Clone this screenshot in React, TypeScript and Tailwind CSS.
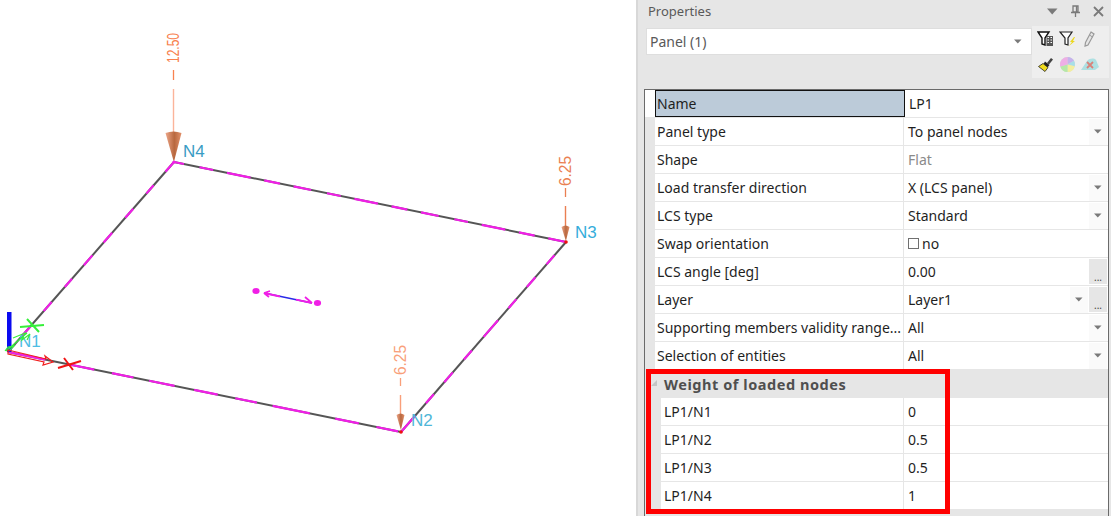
import React from "react";

type Row = { label: string; value: React.ReactNode; arrow?: boolean; more?: boolean; muted?: boolean };

const rows: Row[] = [
  { label: "Panel type", value: "To panel nodes", arrow: true },
  { label: "Shape", value: "Flat", muted: true },
  { label: "Load transfer direction", value: "X (LCS panel)", arrow: true },
  { label: "LCS type", value: "Standard", arrow: true },
  {
    label: "Swap orientation",
    value: (
      <span className="flex items-center gap-[3px]">
        <span className="w-[11px] h-[11px] border border-[#707070] bg-white" />
        no
      </span>
    ),
  },
  { label: "LCS angle [deg]", value: "0.00", more: true },
  { label: "Layer", value: "Layer1", arrow: true, more: true },
  { label: "Supporting members validity range...", value: "All", arrow: true },
  { label: "Selection of entities", value: "All", arrow: true },
];

const nodes: [string, string][] = [
  ["LP1/N1", "0"],
  ["LP1/N2", "0.5"],
  ["LP1/N3", "0.5"],
  ["LP1/N4", "1"],
];

function Caret() {
  return (
    <svg width="8" height="5" viewBox="0 0 8 5" className="block">
      <path d="M0 .5h7.500L3.800 4.500z" fill="#7a7a7a" />
    </svg>
  );
}

function Load({ x, textY, label, dash, line, cone, tip, halfW, color, lineColor }: {
  x: number; textY: number; label: string; dash: [number, number]; line: [number, number]; cone: number; tip: number; halfW: number; color: string; lineColor: string;
}) {
  const id = `cone${Math.round(x)}`;
  return (
    <g>
      <text x={0} y={0} transform={`translate(${x + 5.5} ${textY}) rotate(-90)`} fontFamily="'Liberation Sans', sans-serif" fontSize="16" fill={color} textLength={30} lengthAdjust="spacingAndGlyphs">
        {label}
      </text>
      <line x1={x} x2={x} y1={dash[0]} y2={dash[1]} stroke={color} strokeWidth="1.3" />
      <line x1={x} x2={x} y1={line[0]} y2={line[1]} stroke={lineColor} strokeWidth="1.4" />
      <defs>
        <linearGradient id={id} x1="0" x2="1" y1="0" y2="0">
          <stop offset="0" stopColor="#eda78a" />
          <stop offset="0.55" stopColor="#b8683f" />
          <stop offset="1" stopColor="#e2916b" />
        </linearGradient>
      </defs>
      <path d={`M${x - halfW} ${cone}Q${x} ${cone - 3} ${x + halfW} ${cone}L${x + 0.4} ${tip}z`} fill={`url(#${id})`} />
    </g>
  );
}

function Edge({ a, b, dash, offset = 0 }: { a: [number, number]; b: [number, number]; dash: string; offset?: number }) {
  return (
    <g>
      <line x1={a[0]} y1={a[1]} x2={b[0]} y2={b[1]} stroke="#555555" strokeWidth="2" />
      <line x1={a[0]} y1={a[1]} x2={b[0]} y2={b[1]} stroke="#f01fe6" strokeWidth="2.2" strokeDasharray={dash} strokeDashoffset={offset} />
    </g>
  );
}

function Canvas() {
  const n1: [number, number] = [8, 352];
  const n2: [number, number] = [401, 432];
  const n3: [number, number] = [566, 242];
  const n4: [number, number] = [174, 162];
  return (
    <svg width="636" height="516" viewBox="0 0 636 516" className="block shrink-0">
      <Edge a={n1} b={n2} dash="38 26 24 18 22 16 26 20 24 18 22 16" />
      <Edge a={n2} b={n3} dash="22 16 12 16 13 17 12 18" />
      <Edge a={n3} b={n4} dash="18 14 16 14 24 14 14 16" />
      <Edge a={n4} b={n1} dash="13 18 11 20 12 20 13 17" />
      <Load x={173.5} textY={63} label="12.50" dash={[70, 80]} line={[89, 134]} cone={133} tip={162} halfW={8} color="#f8824f" lineColor="#fbb49a" />
      <Load x={565.5} textY={186} label="6.25" dash={[188, 197]} line={[206, 228]} cone={227} tip={241} halfW={4} color="#ea7f52" lineColor="#ea7f52" />
      <Load x={400.5} textY={375} label="6.25" dash={[378, 386]} line={[395, 416]} cone={415} tip={430} halfW={4} color="#f99f7a" lineColor="#f99f7a" />
      <circle cx={174} cy={162} r={1.6} fill="#f01fe6" />
      <circle cx={566} cy={242} r={1.8} fill="#ee1111" />
      <circle cx={401} cy={432} r={1.8} fill="#ee1111" />
      <g fontFamily="'Liberation Sans', sans-serif" fontSize="17">
        <text x={183} y={157} fill="#3a9cc4">N4</text>
        <text x={575} y={238} fill="#35addb">N3</text>
        <text x={411} y={426} fill="#4fb6d8">N2</text>
        <text x={19} y={347} fill="#4fbde4">N1</text>
      </g>
      <rect x={7} y={312} width={4.500} height={40} fill="#0a0af0" />
      <path d="M6 351L27 333M5 351l3-4 6-1-5 5M13 338l12-5-3 7 8-6-3 6" stroke="#35f03a" strokeWidth="1.200" fill="none" />
      <path d="M20 327l24-2M27 319l12 13" stroke="#35f03a" strokeWidth="2" fill="none" />
      <path d="M8 350l38 9-1-3 8 6-10 3 1-3-36-8z" stroke="#f02020" strokeWidth="1.200" fill="none" />
      <path d="M58 368l23-7M64 358l9 12" stroke="#f01414" strokeWidth="2" fill="none" />
      <ellipse cx={256} cy={291} rx={3.600} ry={2.900} fill="#f01fe6" />
      <ellipse cx={317.500} cy={303} rx={3.600} ry={2.900} fill="#f01fe6" />
      <path d="M264 293L312 303" stroke="#2a2ae8" strokeWidth="1.500" />
      <path d="M264 293L280 296.500M296 299.700L312 303M264 293l6-2M264 293l5 4M312 303l-7-6" stroke="#f01fe6" strokeWidth="1.800" fill="none" />
    </svg>
  );
}

function Tools() {
  return (
    <div className="w-[77px] h-[52px] bg-[#eeeeee] grid grid-cols-3 justify-items-center items-center pl-[2px] pr-[8px] pb-[1px]">
      <svg width="17" height="16" viewBox="0 0 17 16">
        <path d="M1 1h11L8 7v7L5 13V7z" fill="#fff" stroke="#111" strokeWidth="1.400" />
        <rect x="9.500" y="5" width="6.500" height="10" fill="#555" />
        <path d="M10.500 6h1.500v1h-1.500zM13.500 6h1.500v1h-1.500zM10.500 8.500h1.500v1h-1.500zM13.500 8.500h1.500v1h-1.500zM10.500 11h1.500v1h-1.500zM13.500 11h1.500v1h-1.500z" fill="#fff" />
      </svg>
      <svg width="17" height="16" viewBox="0 0 17 16">
        <path d="M1 1h12L9 7v7L6 13V7z" fill="#fff" stroke="#222" strokeWidth="1.200" />
        <path d="M15 6l-4 5h2l-3 4 6-5h-2l2-4z" fill="#ecd820" />
      </svg>
      <svg width="15" height="16" viewBox="0 0 15 16">
        <path d="M9 1l3 2-6 11-3 1 .5-3.500z" fill="#e6e6e6" stroke="#9a9a9a" strokeWidth="1.200" />
        <path d="M7.500 4l3 2" stroke="#9a9a9a" />
      </svg>
      <svg width="17" height="17" viewBox="0 0 17 17">
        <path d="M10 7l4-5 2 1.500-4 5z" fill="#444" />
        <path d="M8 5.500l4.500 3.500-2 2.500L6.500 8z" fill="#222" />
        <path d="M6 7.500l5 4-3 4-6.500-5z" fill="#f0dc1e" stroke="#222" strokeWidth=".8" />
      </svg>
      <svg width="17" height="17" viewBox="0 0 17 17">
        <circle cx="8.500" cy="8.500" r="7.500" fill="#d6d6d6" />
        <path d="M8.500 8.500V1a7.500 7.500 0 0 1 6.500 3.700z" fill="#c5b3ec" />
        <path d="M8.500 8.500L15 4.700a7.500 7.500 0 0 1 .8 5.500z" fill="#a8dfe8" />
        <path d="M8.500 8.500l7.300 1.700A7.500 7.500 0 0 1 8.500 16z" fill="#f3ee9e" />
        <path d="M8.500 8.500V16A7.500 7.500 0 0 1 1.300 10.500z" fill="#b6e8a8" />
        <path d="M8.500 8.500L1.300 10.500A7.500 7.500 0 0 1 8.500 1z" fill="#eeaee6" />
      </svg>
      <svg width="18" height="14" viewBox="0 0 18 14">
        <path d="M0 13L6 4c3-3 7-3 9-1l3 7-4 3z" fill="#aee0e2" />
        <path d="M6 5l6 6M12 5l-6 6" stroke="#d9827a" strokeWidth="1.800" />
      </svg>
    </div>
  );
}

export default function App() {
  return (
    <div className="flex w-[1111px] h-[516px] overflow-hidden bg-white text-[14px] text-[#1f1f1f]" style={{ fontFamily: "'Noto Sans', sans-serif" }}>
      <Canvas />
      <div className="w-[475px] h-[516px] shrink-0 bg-[#e6e6e6] border-l-2 border-[#d8d8d8] flex flex-col relative">
        <div className="h-[22px] mb-[2px] flex items-center justify-between pl-[10px] pr-[7px] text-[#595959] text-[13px]">
          <span className="leading-none">Properties</span>
          <div className="flex items-center gap-[12px] text-[#707070]">
            <svg width="11" height="7" viewBox="0 0 11 7"><path d="M0 .5h10.500L5.200 6.500z" fill="#7a7a7a" /></svg>
            <svg width="11" height="12" viewBox="0 0 11 12"><path d="M3 1h5v6H3zM1 7.500h9M5.500 8v4M6.500 1v6" stroke="#7a7a7a" strokeWidth="1.300" fill="none" /></svg>
            <svg width="11" height="11" viewBox="0 0 11 11"><path d="M1 1l9 9M10 1l-9 9" stroke="#7a7a7a" strokeWidth="1.800" /></svg>
          </div>
        </div>
        <div className="flex pl-[8px] pr-[2px] h-[54px] items-start">
          <div className="w-[386px] h-[27px] mt-[4px] bg-white flex items-center justify-between pl-[3px] pr-[9px] text-[#595959] border border-[#dedede]">
            <span>Panel (1)</span>
            <Caret />
          </div>
          <div className="mt-[2px]"><Tools /></div>
        </div>
        <div className="ml-[6px] mr-[2px] mt-[11px] border-l border-t border-r border-[#6a6a6a] flex-1 flex flex-col bg-[#e6e6e6] min-h-0">
          <div className="h-[28px] shrink-0 pl-[10px] flex bg-white border-b border-[#e6e6e6]">
            <div className="w-[250px] shrink-0 bg-[#bccbd9] border border-[#111] pl-[1px] flex items-center">Name</div>
            <div className="flex-1 pl-[4px] flex items-center">LP1</div>
          </div>
          {rows.map((r) => (
            <div key={r.label} className="h-[28px] shrink-0 ml-[10px] pr-px flex bg-white border-b border-[#e6e6e6]">
              <div className="w-[249px] shrink-0 pl-[2px] flex items-center border-r border-[#e6e6e6] whitespace-nowrap">{r.label}</div>
              <div className={`flex-1 pl-[4px] flex items-center ${r.muted ? "text-[#8a8a8a]" : ""}`}>{r.value}</div>
              {r.arrow && (
                <div className="w-[18px] h-[26px] self-center bg-[#fafafa] flex items-center justify-center"><Caret /></div>
              )}
              {r.more && (
                <div className="w-[18px] h-[25px] self-center ml-px bg-[#e6e6e6] flex items-end justify-center text-[10px] leading-[14px] text-[#444]">...</div>
              )}
            </div>
          ))}
          <div className="h-[28px] shrink-0 flex items-center pt-[2px]">
            <svg width="8" height="8" viewBox="0 0 8 8" className="ml-[5px] mt-[-4px]"><path d="M7 1v6H1z" fill="#c4c4c4" /></svg>
            <span className="ml-[6px] font-bold text-[#4f4f4f] text-[14.5px] tracking-[0.55px]">Weight of loaded nodes</span>
          </div>
          {nodes.map(([k, v]) => (
            <div key={k} className="h-[28px] shrink-0 ml-[16px] flex bg-white border-b border-[#e6e6e6]">
              <div className="w-[243px] shrink-0 pl-[3px] flex items-center border-r border-[#e6e6e6]">{k}</div>
              <div className="flex-1 pl-[4px] flex items-center">{v}</div>
            </div>
          ))}
        </div>
        <div className="absolute left-[8px] top-[369px] w-[304px] h-[145px] border-[5px] border-[#ff0000]" />
      </div>
    </div>
  );
}
